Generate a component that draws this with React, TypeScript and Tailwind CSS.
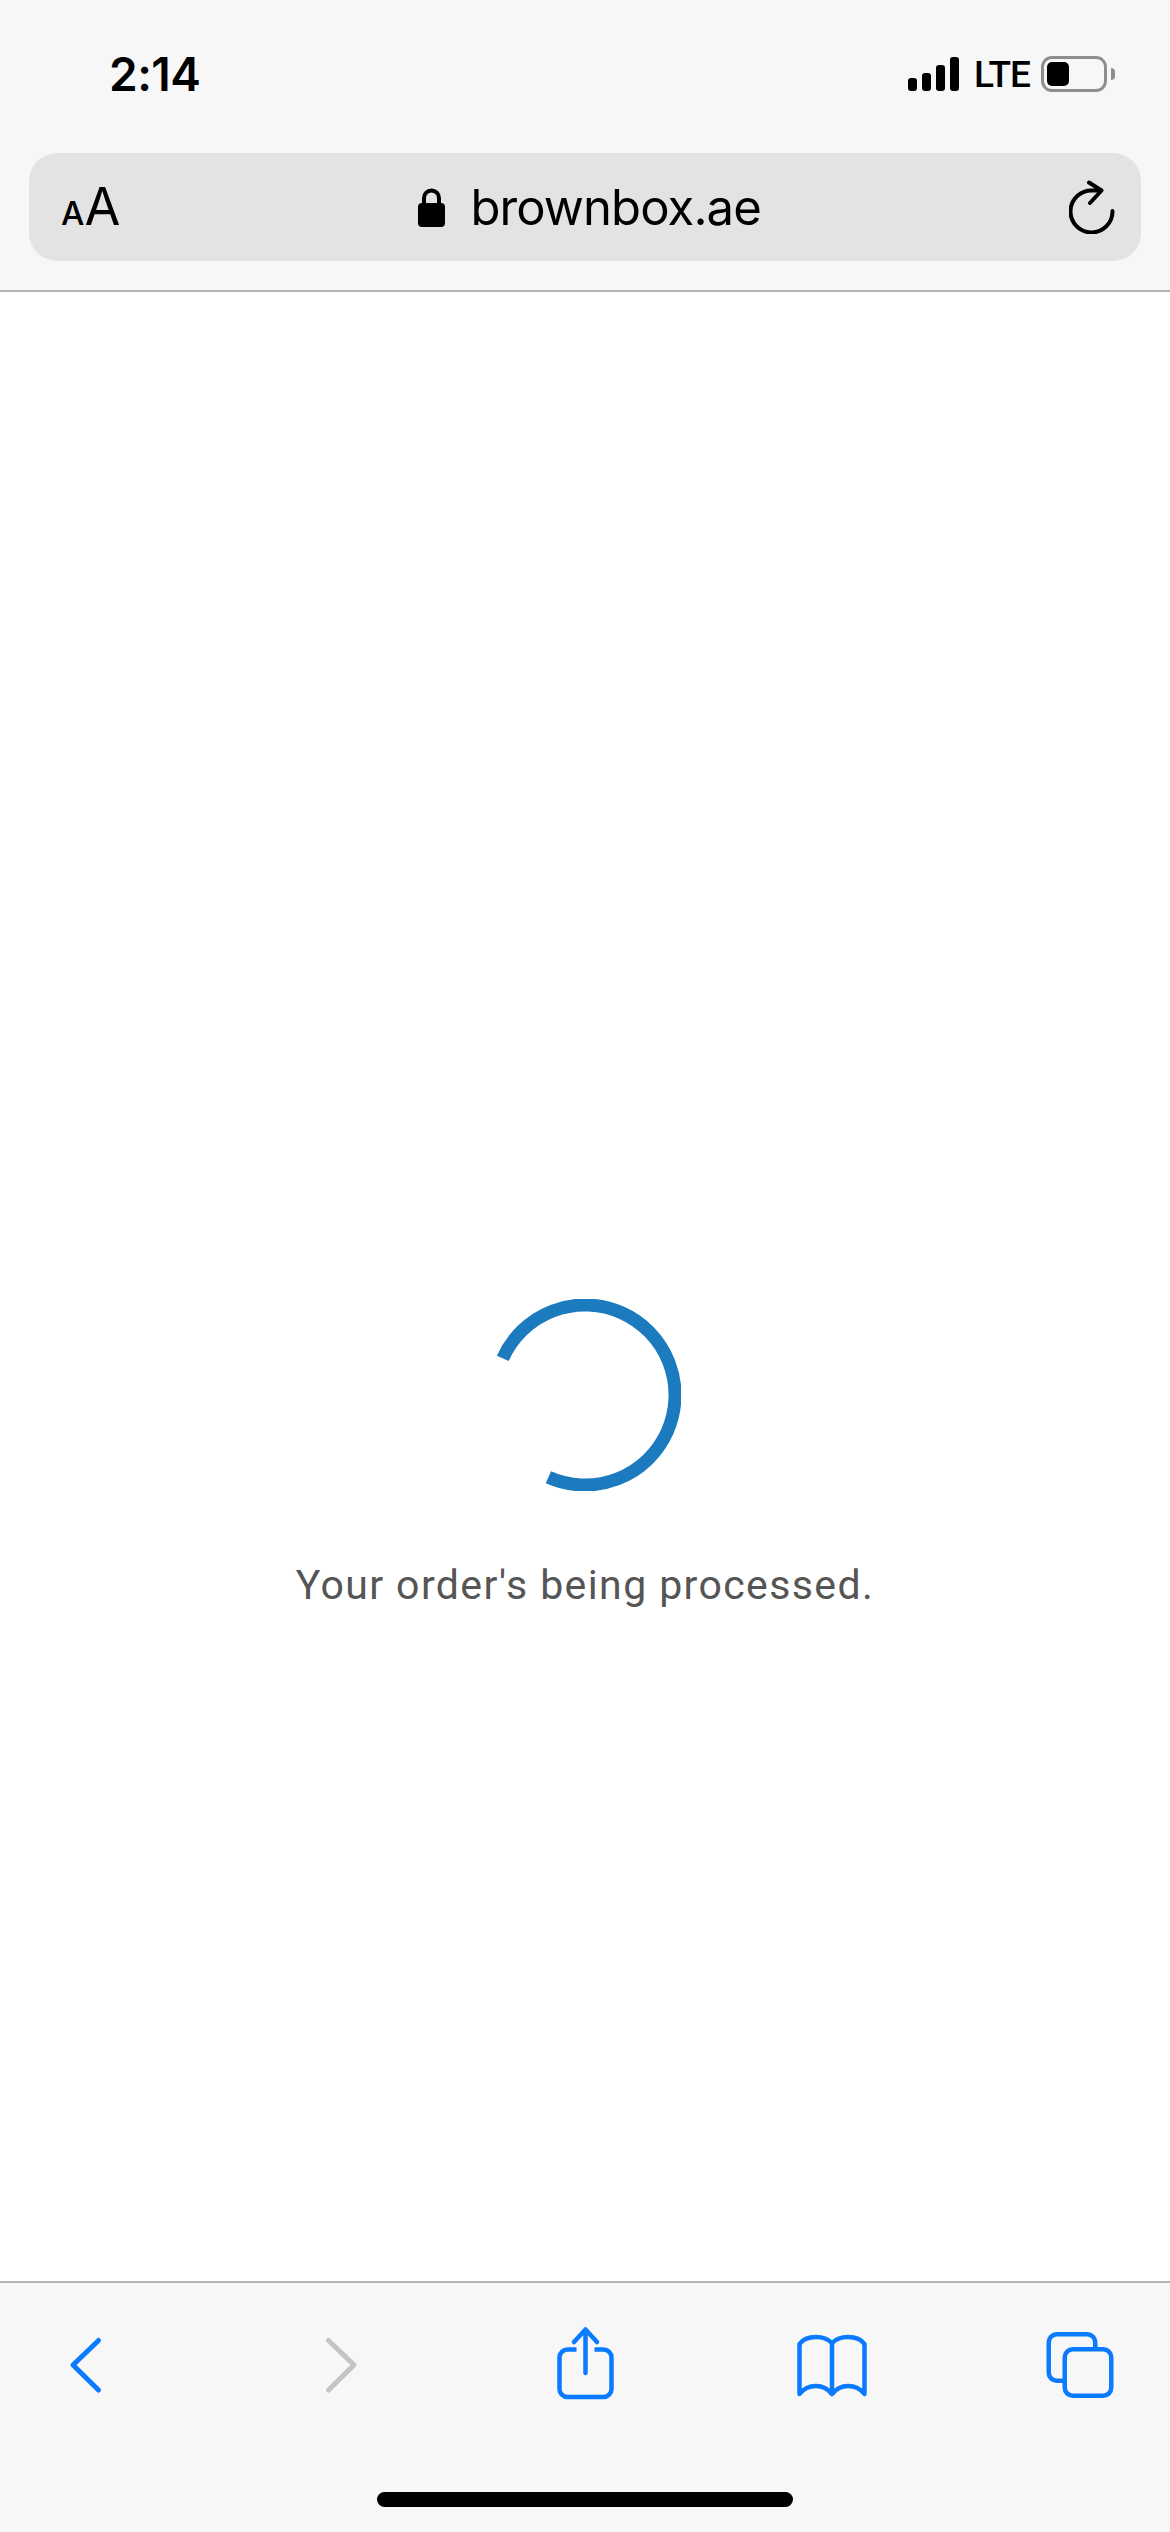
const SANS = "font-['Inter',sans-serif]";

const Chevron = ({ flip, color }: { flip?: boolean; color: string }) => (
  <svg width="72" height="80" viewBox={flip ? "-7 0 72 80" : "-1 0 72 80"} fill="none" stroke={color} strokeWidth="5" strokeLinecap="round" strokeLinejoin="round">
    <path d={flip ? "M23.5 14.5 L49 39 L23.5 64" : "M48.5 14.5 L23 39 L48.5 64"} />
  </svg>
);

const Share = () => (
  <svg width="72" height="80" viewBox="-2.5 0 72 80" fill="none" stroke="#0a7aff" strokeWidth="4.5" strokeLinecap="round" strokeLinejoin="round">
    <path strokeLinecap="butt" d="M27 23.5 H18 a8 8 0 0 0 -8 8 V63 a8 8 0 0 0 8 8 H54 a8 8 0 0 0 8 -8 V31.5 a8 8 0 0 0 -8 -8 H45" />
    <path d="M36 3.5 V47 M24.5 16 L36 3.5 L47.5 16" />
  </svg>
);

const Book = () => (
  <svg width="72" height="80" viewBox="-1 0 72 80" fill="none" stroke="#0a7aff" strokeWidth="4.5" strokeLinecap="round" strokeLinejoin="round">
    <path d="M36 17 C32 13 27 11 20 11 C13 11 7 13 3.5 18 V68 C8 62 13 60 20 60 C27 60 32 63 36 68 C40 63 45 60 52 60 C59 60 64 62 68.5 68 V18 C65 13 59 11 52 11 C45 11 40 13 36 17 V68" />
  </svg>
);

const Tabs = () => (
  <svg width="72" height="80" viewBox="-0.5 0 72 80" fill="none" stroke="#0a7aff" strokeWidth="4.5" strokeLinejoin="round">
    <rect x="20.25" y="23.25" width="46.5" height="46.5" rx="8" />
    <path d="M20 54.75 H12.25 a8 8 0 0 1 -8 -8 V16.25 a8 8 0 0 1 8 -8 H42.75 a8 8 0 0 1 8 8 V23" />
  </svg>
);

const Signal = () => (
  <div className="flex items-end gap-[5px] h-[34px]">
    <div className="w-[9px] h-[13px] rounded-[3px] bg-black" />
    <div className="w-[9px] h-[18px] rounded-[3px] bg-black" />
    <div className="w-[9px] h-[26px] rounded-[3px] bg-black" />
    <div className="w-[9px] h-[34px] rounded-[3px] bg-black" />
  </div>
);

const Battery = () => (
  <div className="flex items-center gap-[4px]">
    <div className="w-[66px] h-[36px] rounded-[11px] border-[3px] border-[#8e8e8e] p-[3px]">
      <div className="w-[22px] h-full rounded-[5px] bg-black" />
    </div>
    <div className="w-[4px] h-[12px] rounded-r-full bg-[#8e8e8e]" />
  </div>
);

const Lock = () => (
  <svg width="27" height="40" viewBox="0 0 27 40" fill="none">
    <path d="M6 18 V11 a7.5 7.5 0 0 1 15 0 V18" stroke="#000" strokeWidth="4" />
    <rect x="0" y="16" width="27" height="24" rx="4" fill="#000" />
  </svg>
);

const Reload = () => (
  <svg width="46" height="54" viewBox="0 0 46 54" fill="none" stroke="#000" strokeWidth="4" strokeLinecap="round" strokeLinejoin="round">
    <path d="M43.5 31 A21 21 0 1 1 24 10.5 H32" />
    <path d="M20 2.5 L32.5 10.5 L21 23" />
  </svg>
);

export default function App() {
  return (
    <div className={`h-[2532px] w-[1170px] flex flex-col bg-white overflow-hidden ${SANS}`}>
      <header className="h-[292px] bg-[#f7f7f7] border-b-2 border-[#b4b4b4] flex flex-col">
        <div className="h-[153px] flex items-center justify-between pl-[109px] pr-[55px] pb-[5px]">
          <span className="text-[46px] leading-none font-semibold tracking-[-0.5px] text-black">2:14</span>
          <div className="flex items-center">
            <Signal />
            <span className="ml-[15px] mr-[11px] font-['Roboto',sans-serif] text-[37px] leading-none font-medium tracking-[-1px] text-black">LTE</span>
            <Battery />
          </div>
        </div>
        <div className="mx-[29px] h-[108px] rounded-[28px] bg-[#e3e3e3] flex items-center justify-between pl-[32px] pr-[26px]">
          <div className="flex items-baseline text-black">
            <span className="text-[33px] leading-none font-medium">A</span>
            <span className="text-[52px] leading-none">A</span>
          </div>
          <div className="flex items-center gap-[25px] mr-[10px]">
            <Lock />
            <span className="text-[49px] leading-none tracking-[-0.9px] text-black">brownbox.ae</span>
          </div>
          <Reload />
        </div>
      </header>

      <main className="flex-1 flex flex-col items-center pt-[1007px]">
        <svg width="192" height="192" viewBox="0 0 192 192" fill="none" stroke="#1c7abf" strokeWidth="13">
          <path d="M13.8 59.4 A90 90 0 1 1 59.4 178.2" />
        </svg>
        <p className="mt-[74px] font-['Roboto',sans-serif] text-[41px] leading-none tracking-[1.4px] text-[#555555]">
          Your order's being processed.
        </p>
      </main>

      <footer className="h-[251px] bg-[#f7f7f7] border-t-2 border-[#b4b4b4] flex flex-col">
        <nav className="flex justify-between pl-[49px] pr-[54px] pt-[43px]">
          <Chevron color="#0a7aff" />
          <Chevron flip color="#c4c4c4" />
          <Share />
          <Book />
          <Tabs />
        </nav>
        <div className="mt-[86px] mx-auto w-[416px] h-[15px] rounded-full bg-black" />
      </footer>
    </div>
  );
}
